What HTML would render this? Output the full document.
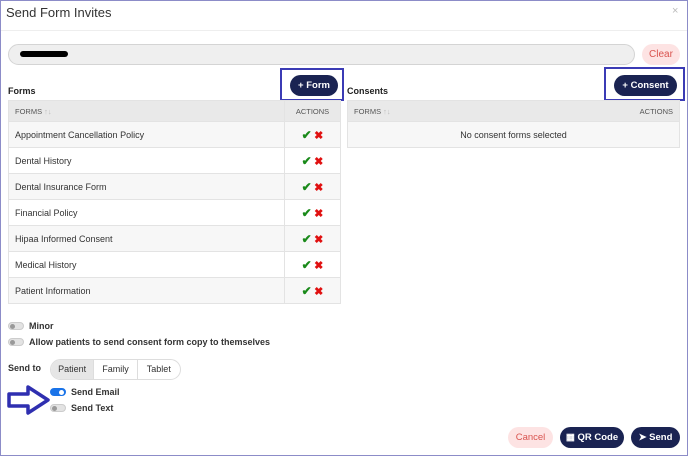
<!DOCTYPE html>
<html><head><style>
*{box-sizing:border-box;margin:0;padding:0}
body{width:688px;height:456px;position:relative;background:#fff;font-family:"Liberation Sans",sans-serif;color:#333;overflow:hidden}
.frame{position:absolute;left:0;top:0;width:688px;height:456px;border:1px solid #8c8cc8}
.abs{position:absolute}
.title{left:6px;top:5px;font-size:13px;color:#333}
.close{left:672px;top:5px;font-size:11px;color:#bbb}
.hr{left:1px;right:1px;top:30px;height:1px;background:#eee}
.input{left:8px;top:44px;width:627px;height:21px;border:1px solid #d4d4d4;border-radius:11px;background:#efefef}
.blk{left:20px;top:51px;width:48px;height:6px;background:#000;border-radius:3px}
.clear{left:642px;top:44px;width:38px;height:21px;border-radius:11px;background:#fde3e3;color:#d9534f;font-size:10px;text-align:center;line-height:21px}
.hl{border:2px solid #3b3bb5}
.btn{background:#1a2352;color:#fff;font-weight:bold;font-size:9.5px;border-radius:11px;text-align:center;line-height:21px}
.lbl{font-size:9px;font-weight:bold;color:#222}
table{position:absolute;border-collapse:collapse;font-size:9px}
td,th{border:1px solid #e3e3e3;height:26px;padding:0 6px;text-align:left}
th{background:#e9e9e9;font-weight:normal;font-size:7.5px;color:#555;height:21px}
tr:nth-child(even) td{background:#f7f7f7}
.chk{color:#1a8a1a;font-weight:bold;font-size:12px}.x{color:#e01010;font-weight:bold;font-size:11px}
.tg{width:16px;height:8px;border-radius:4px;background:#e3e3e3;border:1px solid #ccc;position:absolute}
.tg::after{content:"";position:absolute;left:1px;top:1px;width:5px;height:5px;border-radius:50%;background:#999}
.tg.on{background:#1a73e8;border-color:#1a73e8}
.tg.on::after{left:auto;right:1px;background:#fff}
.t{font-size:9px;font-weight:bold;color:#333}
.seg{left:50px;top:359px;width:131px;height:21px;border:1px solid #ddd;border-radius:11px;display:flex;overflow:hidden;font-size:9px}
.seg div{flex:1;text-align:center;line-height:19px;border-left:1px solid #ddd}
</style></head><body>
<div class="frame"></div>
<div class="abs title">Send Form Invites</div>
<div class="abs close">×</div>
<div class="abs hr"></div>
<div class="abs input"></div><div class="abs blk"></div>
<div class="abs clear">Clear</div>
<div class="abs hl" style="left:280px;top:68px;width:64px;height:33px"></div>
<div class="abs btn" style="left:290px;top:75px;width:48px;height:21px">+ Form</div>
<div class="abs hl" style="left:604px;top:67px;width:81px;height:34px"></div>
<div class="abs btn" style="left:614px;top:75px;width:63px;height:21px">+ Consent</div>
<div class="abs lbl" style="left:8px;top:86px">Forms</div>
<div class="abs lbl" style="left:347px;top:86px">Consents</div>
<table style="left:8px;top:100px;width:333px">
<tr><th>FORMS <span style="color:#bbb">↑↓</span></th><th style="width:56px;text-align:center">ACTIONS</th></tr>
<tr><td>Appointment Cancellation Policy</td><td style="text-align:center"><span class="chk">✔</span> <span class="x">✖</span></td></tr>
<tr><td>Dental History</td><td style="text-align:center"><span class="chk">✔</span> <span class="x">✖</span></td></tr>
<tr><td>Dental Insurance Form</td><td style="text-align:center"><span class="chk">✔</span> <span class="x">✖</span></td></tr>
<tr><td>Financial Policy</td><td style="text-align:center"><span class="chk">✔</span> <span class="x">✖</span></td></tr>
<tr><td>Hipaa Informed Consent</td><td style="text-align:center"><span class="chk">✔</span> <span class="x">✖</span></td></tr>
<tr><td>Medical History</td><td style="text-align:center"><span class="chk">✔</span> <span class="x">✖</span></td></tr>
<tr><td>Patient Information</td><td style="text-align:center"><span class="chk">✔</span> <span class="x">✖</span></td></tr>
</table>
<table style="left:347px;top:100px;width:333px">
<tr><th style="border-right:none">FORMS <span style="color:#bbb">↑↓</span></th><th style="text-align:right;border-left:none">ACTIONS</th></tr>
<tr><td colspan="2" style="text-align:center">No consent forms selected</td></tr>
</table>
<div class="tg" style="left:8px;top:322px"></div><div class="abs t" style="left:29px;top:321px">Minor</div>
<div class="tg" style="left:8px;top:338px"></div><div class="abs t" style="left:29px;top:337px">Allow patients to send consent form copy to themselves</div>
<div class="abs t" style="left:8px;top:363px">Send to</div>
<div class="abs seg"><div style="border-left:none;background:#e6e6e6">Patient</div><div>Family</div><div>Tablet</div></div>
<svg class="abs" style="left:6px;top:384px" width="46" height="32"><path d="M3 10 H22 V3 L42 16 L22 29 V22 H3 Z" fill="none" stroke="#2f2fb0" stroke-width="3.5" stroke-linejoin="round"/></svg>
<div class="tg on" style="left:50px;top:388px"></div><div class="abs t" style="left:71px;top:387px">Send Email</div>
<div class="tg" style="left:50px;top:404px"></div><div class="abs t" style="left:71px;top:403px">Send Text</div>
<div class="abs" style="left:508px;top:427px;width:45px;height:21px;border-radius:11px;background:#fde3e3;color:#d9534f;font-size:9.5px;text-align:center;line-height:21px">Cancel</div>
<div class="abs btn" style="left:560px;top:427px;width:64px;height:21px">▦ QR Code</div>
<div class="abs btn" style="left:631px;top:427px;width:49px;height:21px">➤ Send</div>
</body></html>
